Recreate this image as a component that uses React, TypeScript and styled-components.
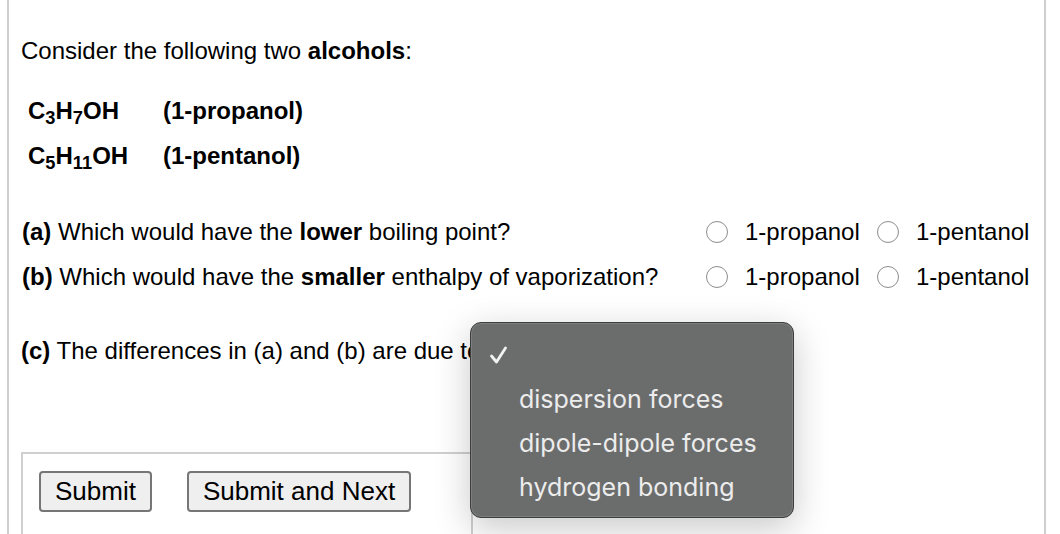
import React from "react";
import styled, { createGlobalStyle } from "styled-components";

const Global = createGlobalStyle`
  html, body { margin: 0; padding: 0; background: #fff; }
  body { font-family: "Liberation Sans", Arial, sans-serif; color: #000; }
`;

const Page = styled.div`
  position: relative;
  margin-left: 7px;
  width: 1039px;
  height: 534px;
  border-left: 2px solid #cfcfcf;
  border-right: 2px solid #cfcfcf;
  padding-left: 12px;
  box-sizing: border-box;
  overflow: hidden;
  font-size: 24px;
`;

const Intro = styled.p`
  margin: 38px 0 0;
  line-height: 26px;
`;

const FormulaTable = styled.div`
  margin-top: 24px;
  padding-left: 7px;
  display: grid;
  grid-template-columns: 135px auto;
  grid-auto-rows: 45px;
  align-items: center;
  font-weight: bold;
  font-size: 24px;
`;

const Sub = styled.sub`
  font-size: 0.76em;
  vertical-align: -0.3em;
  line-height: 0;
`;

const Questions = styled.div`
  margin-top: 31px;
  display: grid;
  grid-template-columns: 685px 171px auto;
  grid-auto-rows: 45px;
  align-items: center;
`;

const QText = styled.div`
  padding-left: 1px;
  white-space: nowrap;
`;

const Option = styled.label`
  display: flex;
  align-items: center;
  gap: 17px;
  white-space: nowrap;
`;

const Radio = styled.input`
  appearance: none;
  margin: 0;
  width: 22px;
  height: 22px;
  border-radius: 50%;
  border: 1.5px solid #8c8c8c;
  background: #fff;
  box-sizing: border-box;
`;

const PartC = styled.div`
  margin-top: 29px;
  line-height: 45px;
  white-space: nowrap;
`;

const ButtonBox = styled.div`
  margin-top: 79px;
  width: 452px;
  height: 120px;
  box-sizing: border-box;
  border: 2px solid #d0d0d0;
  border-bottom: none;
  padding: 17px 16px;
  display: flex;
  gap: 35px;
  align-items: flex-start;
`;

const Button = styled.button`
  font-family: "Liberation Sans", Arial, sans-serif;
  font-size: 26px;
  height: 41px;
  padding: 0 14px;
  background: #efefef;
  border: 2px solid #767676;
  border-radius: 4px;
  color: #000;
`;

const Popup = styled.div`
  position: absolute;
  left: 461px;
  top: 322px;
  width: 324px;
  height: 196px;
  box-sizing: border-box;
  background: #6b6d6d;
  border: 1px solid #3c3d3d;
  box-shadow: inset 0 0 0 1px #7d7f7f, 0 10px 36px rgba(0, 0, 0, 0.22);
  border-radius: 11px;
  padding: 10px 0 9px;
  font-family: Inter, "Open Sans", sans-serif;
  font-size: 25px;
  color: #ececec;
`;

const PopupItem = styled.div`
  height: 44px;
  display: flex;
  align-items: center;
  padding-left: 48px;
  position: relative;
`;

const Check = styled.svg`
  position: absolute;
  left: 18px;
  top: 12px;
`;

export default function App() {
  return (
    <>
      <Global />
      <Page>
        <Intro>
          Consider the following two <b>alcohols</b>:
        </Intro>
        <FormulaTable>
          <div>
            C<Sub>3</Sub>H<Sub>7</Sub>OH
          </div>
          <div>(1-propanol)</div>
          <div>
            C<Sub>5</Sub>H<Sub>11</Sub>OH
          </div>
          <div>(1-pentanol)</div>
        </FormulaTable>
        <Questions>
          <QText>
            <b>(a)</b> Which would have the <b>lower</b> boiling point?
          </QText>
          <Option>
            <Radio type="radio" name="a" />
            1-propanol
          </Option>
          <Option>
            <Radio type="radio" name="a" />
            1-pentanol
          </Option>
          <QText>
            <b>(b)</b> Which would have the <b>smaller</b> enthalpy of vaporization?
          </QText>
          <Option>
            <Radio type="radio" name="b" />
            1-propanol
          </Option>
          <Option>
            <Radio type="radio" name="b" />
            1-pentanol
          </Option>
        </Questions>
        <PartC>
          <b>(c)</b> The differences in (a) and (b) are due to
        </PartC>
        <ButtonBox>
          <Button>Submit</Button>
          <Button>Submit and Next</Button>
        </ButtonBox>
        <Popup>
          <PopupItem>
            <Check width="19" height="20" viewBox="0 0 19 20">
              <path d="M2.5 11 L7.5 17 L16.5 3" fill="none" stroke="#f2f2f2" strokeWidth="2.8" strokeLinecap="round" strokeLinejoin="round" />
            </Check>
          </PopupItem>
          <PopupItem>dispersion forces</PopupItem>
          <PopupItem>dipole-dipole forces</PopupItem>
          <PopupItem>hydrogen bonding</PopupItem>
        </Popup>
      </Page>
    </>
  );
}
